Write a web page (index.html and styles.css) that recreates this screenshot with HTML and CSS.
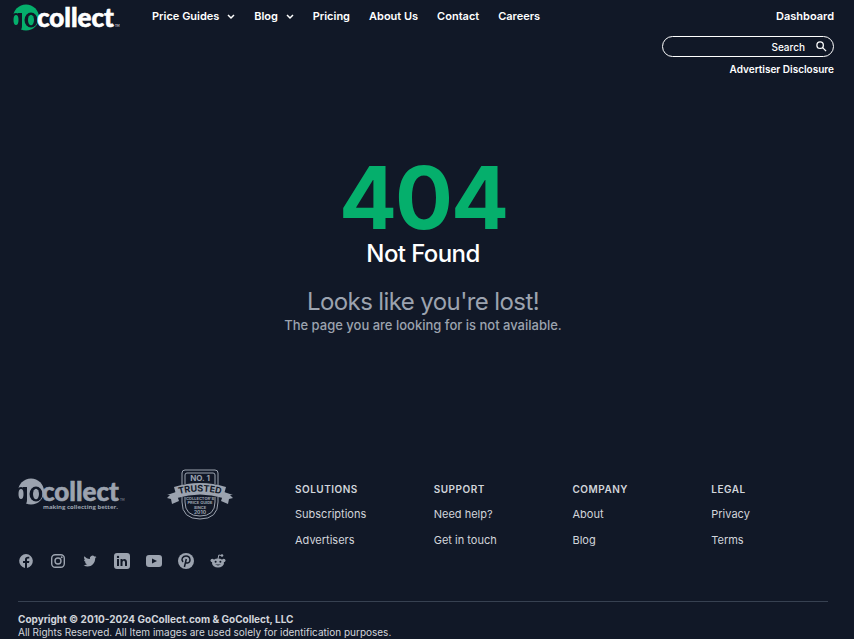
FILE: index.html
```html
<!DOCTYPE html>
<html lang="en">
<head>
    <meta charset="UTF-8">
    <meta name="viewport" content="width=device-width, initial-scale=1.0">
    <title>Not Found | GoCollect</title>
    <link rel="stylesheet" href="styles.css">
</head>
<body>
    <!-- shared logo shapes -->
    <svg class="sprite" aria-hidden="true">
        <symbol id="logo" viewBox="0 0 110 34" overflow="visible">
            <circle class="mark" cx="13" cy="13.500" r="13"/>
            <g class="cut">
                <ellipse cx="3" cy="16" rx="5.500" ry="7"/>
                <path d="M5 9h4v13q0 5-4 5H0v-5h5z"/>
                <ellipse cx="18" cy="16" rx="6.500" ry="7.500"/>
            </g>
            <ellipse class="mark" cx="3" cy="16" rx="2.500" ry="5"/>
            <ellipse class="mark" cx="18" cy="16" rx="3" ry="5.200"/>
            <text class="word" x="24" y="23">collect</text>
            <text class="tm" x="102" y="23">TM</text>
        </symbol>
    </svg>

    <header class="header">
        <a class="logo" href="#" aria-label="GoCollect">
            <svg width="110" height="34"><use href="#logo"/></svg>
        </a>
        <nav class="nav">
            <a href="#">Price Guides
                <svg class="chevron" viewBox="0 0 8 6"><path d="M1 1l3 3 3-3"/></svg>
            </a>
            <a href="#">Blog
                <svg class="chevron" viewBox="0 0 8 6"><path d="M1 1l3 3 3-3"/></svg>
            </a>
            <a href="#">Pricing</a>
            <a href="#">About Us</a>
            <a href="#">Contact</a>
            <a href="#">Careers</a>
        </nav>
        <div class="account">
            <a class="dashboard" href="#">Dashboard</a>
            <form class="search">
                <input type="text" placeholder="Search" aria-label="Search">
                <button type="button" aria-label="Submit search">
                    <svg viewBox="0 0 12 12"><circle cx="4.500" cy="4.500" r="3.500"/><path d="M7 7l4 4"/></svg>
                </button>
            </form>
            <a class="disclosure" href="#">Advertiser Disclosure</a>
        </div>
    </header>

    <main class="error">
        <h1>404</h1>
        <h2>Not Found</h2>
        <p class="lost">Looks like you're lost!</p>
        <p class="detail">The page you are looking for is not available.</p>
    </main>

    <footer class="footer">
        <div class="footer-top">
            <div class="brand">
                <div class="brand-logos">
                    <svg class="muted" width="110" height="34" role="img" aria-label="GoCollect">
                        <use href="#logo"/>
                        <text class="tagline" x="25" y="31">making collecting better.</text>
                    </svg>
                    <svg class="badge" width="66" height="52" viewBox="0 0 66 52" role="img" aria-label="No. 1 trusted collector's price guide">
                        <path class="line" d="M15 16V4q0-3 3-3h30q3 0 3 3v12M15 28v5q0 17 18 17t18-17v-5"/>
                        <path class="line" d="M18 15V6q0-2 2-2h26q2 0 2 2v9M18 28v5q0 14 15 14t15-14v-5"/>
                        <path class="fill" d="M0 26l9-3 3 9-7 3-1-5-4-1 3-3zM66 26l-9-3-3 9 7 3 1-5 4-1-3-3z"/>
                        <path class="fill" d="M7 18Q33 10 59 18l-3 11Q33 22 10 29z"/>
                        <text x="33" y="12" font-size="8">NO. 1</text>
                        <path id="arc" fill="none" d="M9 26Q33 19 57 26"/>
                        <text class="dark" font-size="9"><textPath href="#arc" startOffset="50%">TRUSTED</textPath></text>
                        <text x="33" y="31" font-size="4">COLLECTOR'S</text>
                        <text x="33" y="35" font-size="4">PRICE GUIDE</text>
                        <text x="33" y="40" font-size="4">SINCE</text>
                        <text x="33" y="45" font-size="5">2010</text>
                    </svg>
                </div>
                <div class="social">
                    <a href="#" aria-label="Facebook"><svg viewBox="0 0 16 16"><path fill-rule="evenodd" d="M8 1a7 7 0 0 1 1 13.900V10h2l.4-2H9V6.800c0-.8.400-1.200 1.200-1.200h1.100V3.800C9 3.300 7 4 7 6.300V8H5v2h2v4.900A7 7 0 0 1 8 1z"/></svg></a>
                    <a href="#" aria-label="Instagram"><svg viewBox="0 0 16 16"><g fill="none" stroke="currentColor" stroke-width="1.400"><rect x="1.700" y="1.700" width="12.600" height="12.600" rx="3.500"/><circle cx="8" cy="8" r="3"/></g><circle cx="11.700" cy="4.300" r="1"/></svg></a>
                    <a href="#" aria-label="Twitter"><svg viewBox="0 0 16 16"><path d="M14.500 3.900c-.5.200-1 .4-1.500.4.600-.3 1-.8 1.200-1.400-.5.300-1.100.5-1.700.6a2.700 2.700 0 0 0-4.600 2.500C5.600 5.900 3.700 4.800 2.400 3.200c-.7 1.200-.3 2.800.8 3.600-.4 0-.8-.1-1.200-.3 0 1.300.9 2.400 2.100 2.700-.4.100-.8.100-1.200 0 .3 1.100 1.300 1.900 2.500 1.900-1.100.9-2.500 1.300-3.900 1.100 5.300 3.300 11.700-.3 11.700-7 .5-.3 1-.8 1.300-1.300z"/></svg></a>
                    <a href="#" aria-label="LinkedIn"><svg viewBox="0 0 16 16"><path fill-rule="evenodd" d="M3 0h10q3 0 3 3v10q0 3-3 3H3q-3 0-3-3V3q0-3 3-3zM3 6v7h2V6zM4 2.700a1.200 1.200 0 1 0 0 2.400 1.200 1.200 0 0 0 0-2.400zM6.500 6v7h2V9.500c0-2.200 2.500-2.200 2.500 0V13h2V9c0-3.500-3.500-3.800-4.500-2V6z"/></svg></a>
                    <a href="#" aria-label="YouTube"><svg viewBox="0 0 16 16"><path fill-rule="evenodd" d="M3 2h10q3 0 3 3v6q0 3-3 3H3q-3 0-3-3V5q0-3 3-3zM6 5.500v5L11 8z"/></svg></a>
                    <a href="#" aria-label="Pinterest"><svg viewBox="0 0 16 16"><circle cx="8" cy="8" r="8"/><path class="pin" d="M5 9C2.500 6 5 3 8 3c5 0 5 7 1.500 7C8 10 7.500 9 7.500 9M8.300 6L6.400 14"/></svg></a>
                    <a href="#" aria-label="Reddit"><svg viewBox="0 0 16 16"><circle cx="2.300" cy="7.500" r="1.800"/><circle cx="13.700" cy="7.500" r="1.800"/><circle cx="12" cy="2.500" r="1.300"/><path fill="none" stroke="currentColor" d="M8 6l.8-4 3 .6"/><ellipse cx="8" cy="10" rx="6" ry="4.500"/><g class="face"><circle cx="5.600" cy="8.800" r="1"/><circle cx="10.400" cy="8.800" r="1"/><path d="M5 11q3 2.800 6 0-3 1-6 0z"/></g></svg></a>
                </div>
            </div>
            <div class="links">
                <div>
                    <h3>Solutions</h3>
                    <a href="#">Subscriptions</a>
                    <a href="#">Advertisers</a>
                </div>
                <div>
                    <h3>Support</h3>
                    <a href="#">Need help?</a>
                    <a href="#">Get in touch</a>
                </div>
                <div>
                    <h3>Company</h3>
                    <a href="#">About</a>
                    <a href="#">Blog</a>
                </div>
                <div>
                    <h3>Legal</h3>
                    <a href="#">Privacy</a>
                    <a href="#">Terms</a>
                </div>
            </div>
        </div>
        <div class="copyright">
            <p><strong>Copyright © 2010-2024 GoCollect.com &amp; GoCollect, LLC</strong></p>
            <p>All Rights Reserved. All Item images are used solely for identification purposes.</p>
        </div>
    </footer>
</body>
</html>
```

FILE: styles.css
```css
:root {
    --bg: #111827;
    --green: #05af6c;
    --muted: #9ca3af;
    --light: #d1d5db;
}
* {
    box-sizing: border-box;
}
body {
    margin: 0;
    background: var(--bg);
    color: white;
    font-family: Inter, sans-serif;
    font-size: 11px;
    line-height: 16px;
}
h1, h2, h3, p {
    margin: 0;
}
a {
    color: inherit;
    text-decoration: none;
}
svg {
    overflow: visible;
}
.sprite {
    position: absolute;
    width: 0;
    height: 0;
}

/* header */
.header {
    display: flex;
    align-items: flex-start;
    padding: 4px 20px 0 13px;
}
.logo {
    color: var(--green);
    height: 34px;
    margin-right: 29px;
}
.mark {
    fill: currentColor;
}
.cut {
    fill: var(--bg);
}
.word {
    fill: var(--word, white);
    stroke: var(--word, white);
    stroke-width: 0.6;
    font: 900 26px Lato, sans-serif;
}
.tm {
    fill: var(--word, white);
    font: 3px Lato, sans-serif;
}
.nav {
    display: flex;
    gap: 19px;
    padding-top: 4px;
    font-weight: 600;
}
.nav a {
    white-space: nowrap;
}
.chevron {
    width: 8px;
    height: 6px;
    margin-left: 5px;
    fill: none;
    stroke: white;
    stroke-width: 1.5;
}
.account {
    display: flex;
    flex-direction: column;
    align-items: flex-end;
    width: 21%;
    padding-top: 4px;
    margin-left: auto;
    font-weight: 600;
}
.search {
    display: flex;
    align-items: center;
    width: 100%;
    height: 21px;
    margin: 12px 0 4px;
    padding: 0 6px;
    border: 1px solid white;
    border-radius: 11px;
}
.search input {
    flex: 1;
    min-width: 0;
    padding: 0;
    border: 0;
    outline: 0;
    background: none;
    color: white;
    font: 500 10px Inter, sans-serif;
    text-align: right;
}
.search input::placeholder {
    color: white;
    opacity: 1;
}
.search button {
    display: flex;
    margin-left: 11px;
    padding: 0;
    border: 0;
    background: none;
}
.search svg {
    width: 11px;
    height: 11px;
    fill: none;
    stroke: white;
    stroke-width: 1.4;
}
.disclosure {
    font-size: 10px;
}

/* error message */
.error {
    padding: 79px 8px 0 0;
    text-align: center;
}
.error h1 {
    color: var(--green);
    font-size: 86px;
    font-weight: 700;
    line-height: 84px;
    letter-spacing: -0.025em;
}
.error h2 {
    font-size: 24px;
    font-weight: 500;
    line-height: 28px;
    letter-spacing: -0.025em;
}
.lost {
    margin-top: 20px;
    color: var(--muted);
    font-size: 24px;
    line-height: 28px;
    letter-spacing: -0.025em;
}
.detail {
    color: var(--muted);
    font-size: 13px;
    font-weight: 500;
    line-height: 18px;
}

/* footer */
.footer {
    padding: 135px 26px 0 18px;
    color: var(--light);
}
.footer-top {
    display: grid;
    grid-template-columns: 1fr 2fr;
    padding-bottom: 32px;
    border-bottom: 1px solid #374151;
}
.brand {
    color: var(--muted);
}
.brand-logos {
    display: flex;
    align-items: center;
    gap: 39px;
}
.muted {
    --word: var(--muted);
}
.tagline {
    fill: var(--muted);
    font: 700 6px "Open Sans", sans-serif;
}
.badge text {
    fill: var(--muted);
    font-family: Inter, sans-serif;
    font-weight: 700;
    text-anchor: middle;
}
.badge .dark {
    fill: var(--bg);
}
.badge .fill {
    fill: var(--muted);
}
.badge .line {
    fill: none;
    stroke: var(--muted);
}
.social {
    display: flex;
    gap: 16px;
    margin-top: 32px;
}
.social svg {
    display: block;
    width: 16px;
    height: 16px;
    fill: currentColor;
}
.social .pin {
    fill: none;
    stroke: var(--bg);
    stroke-width: 1.5;
}
.social .face {
    fill: var(--bg);
}
.links {
    display: grid;
    grid-template-columns: repeat(4, 1fr);
    column-gap: 22px;
    padding: 12px 0 0 7px;
}
.links h3 {
    font-size: 10px;
    font-weight: 600;
    line-height: 16px;
    letter-spacing: 0.05em;
    text-transform: uppercase;
}
.links a {
    display: block;
    margin-top: 10px;
}
.links h3 + a {
    margin-top: 9px;
}
.copyright {
    padding-top: 11px;
    font-size: 10px;
    line-height: 13px;
}
```
